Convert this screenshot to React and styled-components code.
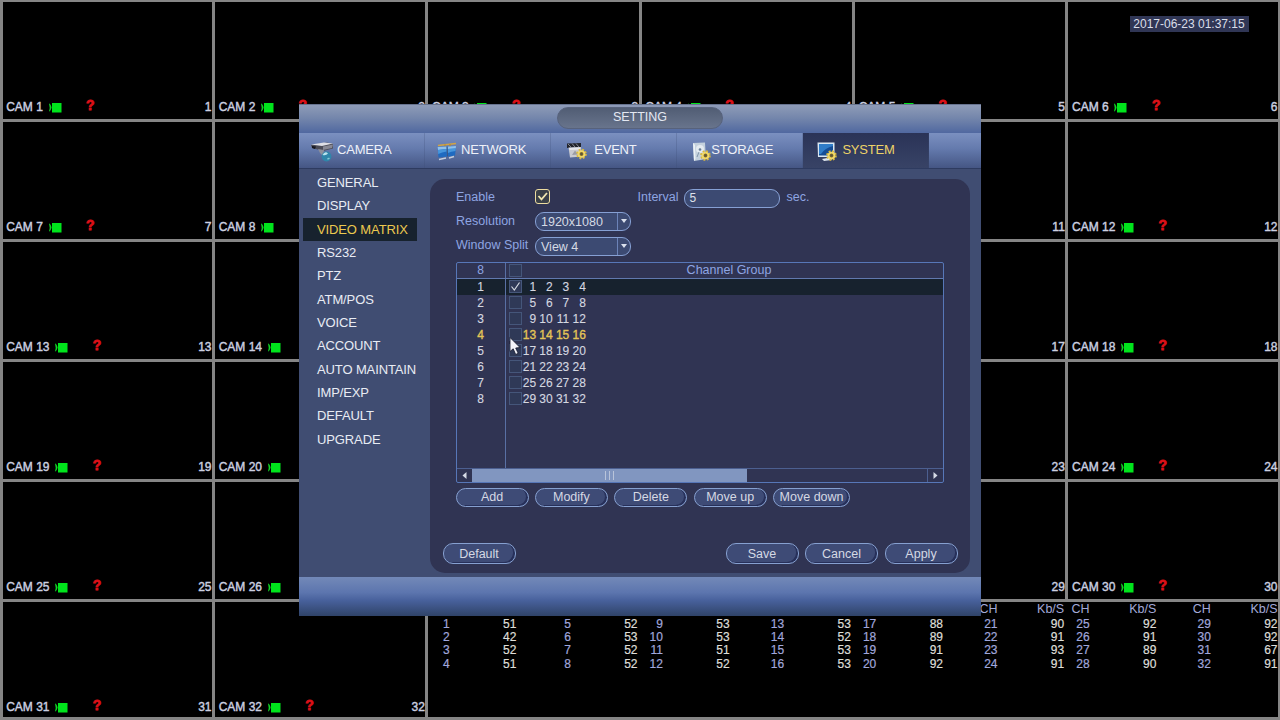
import React from "react";
import styled, { createGlobalStyle } from "styled-components";

const tabs = [
    { name: "CAMERA", icon: "camera", left: 11, gap: 3 },
    { name: "NETWORK", icon: "network", left: 12, gap: 0 },
    { name: "EVENT", icon: "event", left: 16, gap: 3 },
    { name: "STORAGE", icon: "storage", left: 15, gap: -5 },
    { name: "SYSTEM", icon: "system", left: 14, gap: 1 },
];

const menu = [
    "GENERAL", "DISPLAY", "VIDEO MATRIX", "RS232", "PTZ", "ATM/POS",
    "VOICE", "ACCOUNT", "AUTO MAINTAIN", "IMP/EXP", "DEFAULT", "UPGRADE",
];

const cameras = Array.from({ length: 32 }, (_, i) => i + 1);

const rates = [
    [[51, 42, 52, 51], [52, 53, 52, 52]],
    [[53, 53, 51, 52], [53, 52, 53, 53]],
    [[88, 89, 91, 92], [90, 91, 93, 91]],
    [[92, 91, 89, 90], [92, 92, 67, 91]],
];

const groups = [1, 2, 3, 4, 5, 6, 7, 8];

const Gear = ({ x, y }) => (
    <g transform={`translate(${x} ${y})`}>
        <circle r="4.300" fill="none" stroke="#d9b83c" strokeWidth="2" strokeDasharray="1.9 1.48" />
        <circle r="2.900" fill="#8d7424" stroke="#f0d868" strokeWidth="1.900" />
        <circle r="1.200" fill="#5b5540" />
    </g>
);

const icons = {
    camera: (
        <>
            <path d="M1 3 L17 .5 L23 2 L23 6.500 L13 9 L2 6z" fill="#4b4c58" />
            <path d="M1 2.500 L14 .5 L23 1.500 L12 4z" fill="#dedfe6" />
            <path d="M13 4.500 L23 2.500 L22 6 L13 8z" fill="#878894" />
            <path d="M2 4 L6 4.500 L5 7 L2 6z" fill="#15161d" />
            <path d="M8 7 L14 8 L13 14 L10 11z" fill="#8d8f9b" />
            <circle cx="16.500" cy="14.500" r="4.900" fill="#2f86aa" />
            <path d="M12.500 13 Q15 8.500 18 11.500 Q16 14 12.500 13z" fill="#b9e3ec" />
            <path d="M17 17 Q18 15 20 16 Q18.500 18.500 17 17z" fill="#86c8d5" />
        </>
    ),
    network: (
        <>
            <path d="M1 3.500 L19 1.500" stroke="#d3a441" strokeWidth="1.600" />
            <path d="M8 2.500 L8 6 M13 2 L13 5" stroke="#b48a3a" strokeWidth="1.500" />
            <path d="M.5 5 L9.500 4.500 L10 14.500 L1.500 15.500z" fill="#1f6ac0" />
            <path d="M.5 5 L9.500 4.500 L9.500 7 L1 8z" fill="#8fc0ec" />
            <path d="M1 8 L9.500 7 L9.500 9.500 Q5 10 1.200 12z" fill="#4796dc" />
            <path d="M10.500 4.500 L19 4 L18 13.500 L11 14.500z" fill="#1f6ac0" />
            <path d="M10.500 4.500 L19 4 L18.800 6.500 L10.700 7z" fill="#8fc0ec" />
            <path d="M10.700 7 L18.800 6.500 L18.500 9 Q14 9.500 11 11z" fill="#4796dc" />
            <path d="M10.200 4.500 L10.500 14.500" stroke="#34507e" strokeWidth=".8" />
            <path d="M2 17.500 L9 16 M12 16 L17 14.500" stroke="#c4cedd" strokeWidth="1.400" />
        </>
    ),
    event: (
        <>
            <path d="M0 1.500 L14 1 L14 5 L0 6z" fill="#22242c" />
            <path d="M1 2 L4 5 M5 1.500 L8 5 M9 1.500 L12 5" stroke="#8f929c" strokeWidth=".9" />
            <path d="M1.500 5.500 L14 5 L15 14.500 L3 15.500z" fill="#c9cad0" />
            <path d="M2 6 L13 5.500 L13.500 7.500 L2.500 8z" fill="#e6e7eb" />
            <path d="M5 13 L8 8.500 L11 12.500z" fill="#9a9ca5" />
            <Gear x={14.5} y={12} />
        </>
    ),
    storage: (
        <>
            <path d="M1 1 L13 .5 L14 17 L2 19z" fill="#c4d1dd" />
            <path d="M1 1 L3 3 L3.500 17 L2 19z" fill="#ecf2f6" />
            <circle cx="8" cy="7" r="4" fill="#e4ebf1" />
            <circle cx="8" cy="7.500" r="1.300" fill="#667d96" />
            <path d="M7 10 L5 15" stroke="#8297ab" />
            <Gear x={13.5} y={13.5} />
        </>
    ),
    system: (
        <>
            <path d="M.5 .5 H17.500 V15 H1z" fill="#dae7f2" />
            <path d="M2 2 H16 V13.500 H2z" fill="#154d96" />
            <path d="M2 2 H16 V4 Q8 6 4 12 H2z" fill="#2f7cc8" />
            <path d="M5 17 L13 15.500 L15 18 L7 19z" fill="#dee6ee" />
            <Gear x={14.5} y={13.5} />
        </>
    ),
};

// the dialog covers the middle of the wall, so those cells stay partly blank
const isCovered = (n, part) => {
    const column = (n - 1) % 6;
    const row = Math.floor((n - 1) / 6);
    if (row === 0 || row === 5) return false;
    if (part === "number") return column >= 1 && column <= 3;
    if (part === "lost") return column >= 1 && column <= 4;
    return column >= 2 && column <= 4;
};

const App = () => {
    return (
        <Screen>
            <GlobalStyle />
            <Wall>
                {cameras.map((n) => (
                    <Cell key={n}>
                        {!isCovered(n, "name") && (
                            <>
                                <CamName>CAM {n}</CamName>
                                <RecIcon width="14" height="11" viewBox="0 0 14 11">
                                    <path d="M1 1.500 Q2.500 1.500 3.600 5.500 Q2.500 9.500 1 9.500 Q2.300 5.500 1 1.500z" fill="#10d424" />
                                    <rect x="4" y="1" width="9.500" height="9.500" fill="#00e51c" />
                                </RecIcon>
                            </>
                        )}
                        {!isCovered(n, "lost") && <Lost>?</Lost>}
                        {!isCovered(n, "number") && <CamNumber>{n}</CamNumber>}
                    </Cell>
                ))}
                <RateBoard>
                    {rates.map((pair, g) => (
                        <RateGroup key={g}>
                            {pair.map((list, c) => (
                                <React.Fragment key={c}>
                                    <RateColumn $width={c === 0 ? 22 : 54.5}>
                                        <RateHead>{(g === 3 || (g === 2 && c === 1)) && "CH"}</RateHead>
                                        {list.map((_, i) => (
                                            <Channel key={i}>{g * 8 + c * 4 + i + 1}</Channel>
                                        ))}
                                    </RateColumn>
                                    <RateColumn $width={66.7}>
                                        <RateHead>{(g === 3 || (g === 2 && c === 1)) && "Kb/S"}</RateHead>
                                        {list.map((rate, i) => (
                                            <Rate key={i}>{rate}</Rate>
                                        ))}
                                    </RateColumn>
                                </React.Fragment>
                            ))}
                        </RateGroup>
                    ))}
                </RateBoard>
            </Wall>

            <Clock>2017-06-23 01:37:15</Clock>

            <Dialog>
                <TitleBar>
                    <Title>SETTING</Title>
                </TitleBar>
                <TabBar>
                    {tabs.map((tab) => (
                        <Tab key={tab.name} $active={tab.name === "SYSTEM"} $left={tab.left} $gap={tab.gap}>
                            <svg width="24" height="20" viewBox="0 0 24 20" fill="none">{icons[tab.icon]}</svg>
                            <span>{tab.name}</span>
                        </Tab>
                    ))}
                </TabBar>
                <Body>
                    <Menu>
                        {menu.map((item) => (
                            <MenuItem key={item} $active={item === "VIDEO MATRIX"}>{item}</MenuItem>
                        ))}
                    </Menu>
                    <Panel>
                        <Form>
                            <FormRow>
                                <Label>Enable</Label>
                                <Enable>
                                    <svg width="11" height="11" viewBox="0 0 11 11" fill="none">
                                        <path d="M1.500 5 L4.500 8.300 L10 2" stroke="#f0e6b0" strokeWidth="1.800" />
                                    </svg>
                                </Enable>
                                <IntervalLabel>Interval</IntervalLabel>
                                <Input>5</Input>
                                <Unit>sec.</Unit>
                            </FormRow>
                            <FormRow>
                                <Label>Resolution</Label>
                                <Select>
                                    <span>1920x1080</span>
                                    <Arrow />
                                </Select>
                            </FormRow>
                            <FormRow>
                                <Label>Window Split</Label>
                                <Select>
                                    <span>View 4</span>
                                    <Arrow />
                                </Select>
                            </FormRow>
                        </Form>
                        <Table>
                            <HeadRow>
                                <Index>8</Index>
                                <Check />
                                <HeadTitle>Channel Group</HeadTitle>
                            </HeadRow>
                            <Rows>
                                {groups.map((n) => (
                                    <Row key={n} $selected={n === 1} $hover={n === 4}>
                                        <Index>{n}</Index>
                                        <Check>
                                            {n === 1 && (
                                                <svg width="11" height="11" viewBox="0 0 11 11" fill="none">
                                                    <path d="M1.500 5.500 L4.300 9 L9.500 1.500" stroke="#d5d9e2" strokeWidth="1.200" />
                                                </svg>
                                            )}
                                        </Check>
                                        <Numbers>
                                            {[3, 2, 1, 0].map((k) => (
                                                <span key={k}>{n * 4 - k}</span>
                                            ))}
                                        </Numbers>
                                    </Row>
                                ))}
                                <Filler />
                            </Rows>
                            <ScrollBar>
                                <ScrollEnd>
                                    <svg width="5" height="7"><path d="M4.500 0 V7 L.5 3.500z" fill="#d6dbe6" /></svg>
                                </ScrollEnd>
                                <Thumb><i /><i /><i /></Thumb>
                                <Track />
                                <ScrollEnd $right>
                                    <svg width="5" height="7"><path d="M.5 0 V7 L4.500 3.500z" fill="#d6dbe6" /></svg>
                                </ScrollEnd>
                            </ScrollBar>
                        </Table>
                        <Actions>
                            <Button>Add</Button>
                            <Button>Modify</Button>
                            <Button>Delete</Button>
                            <Button>Move up</Button>
                            <Button $width={77}>Move down</Button>
                        </Actions>
                        <BottomActions>
                            <Button $height={21}>Default</Button>
                            <Spacer />
                            <Button $height={21}>Save</Button>
                            <Button $height={21}>Cancel</Button>
                            <Button $height={21}>Apply</Button>
                        </BottomActions>
                    </Panel>
                </Body>
                <Footer />
            </Dialog>

            <Cursor width="13" height="19" viewBox="0 0 13 19">
                <path d="M1 .5 V14.500 L4.200 11.800 L6.700 17.500 L9.200 16.300 L6.700 11 L11 10.500z" fill="#f4f4fa" stroke="#14162c" strokeWidth=".8" />
            </Cursor>
        </Screen>
    );
}

export default App;

const GlobalStyle = createGlobalStyle`
    body {
        margin: 0;
        background: #000;
        font-family: "Liberation Sans", Arial, sans-serif;
    }

    * {
        box-sizing: border-box;
    }
`;

const Screen = styled.div`
    position: relative;
    width: 1280px;
    height: 720px;
    overflow: hidden;
`;

const Wall = styled.div`
    display: grid;
    height: 720px;
    padding: 2px 2px 3px 2.5px;
    gap: 3px;
    grid-template-columns: 209.5px repeat(4, 210.33px) 1fr;
    grid-template-rows: repeat(5, 117px) 1fr;
    background: #858585;
`;

const Cell = styled.div`
    display: flex;
    align-items: flex-start;
    height: 100%;
    padding: 97px 0.5px 0 3.7px;
    background: #000;
    color: #ccd0e0;
    font-size: 12px;
    line-height: 16px;
    white-space: nowrap;
    overflow: hidden;
`;

const CamName = styled.span`
    -webkit-text-stroke: 0.4px #ccd0e0;
`;

const RecIcon = styled.svg`
    margin: 2.5px 0 0 4.7px;
    flex: none;
`;

const Lost = styled.span`
    margin: -2px 0 0 24.5px;
    color: #dc1018;
    font-size: 14px;
    font-weight: bold;
    -webkit-text-stroke: 0.8px #dc1018;
`;

const CamNumber = styled.span`
    margin-left: auto;
    -webkit-text-stroke: 0.4px #ccd0e0;
`;

const RateBoard = styled.div`
    grid-column: 3 / 7;
    display: flex;
    padding-top: 1px;
    background: #000;
    overflow: hidden;
`;

const RateGroup = styled.div`
    display: flex;
    flex: none;
    width: 213.33px;
    margin-left: -0.7px;
    margin-right: 0.7px;
`;

const RateColumn = styled.div`
    display: flex;
    flex-direction: column;
    align-items: flex-end;
    flex: none;
    width: ${(p) => p.$width}px;
    font-size: 12px;
    line-height: 13.4px;
    white-space: nowrap;
`;

const RateHead = styled.div`
    height: 14.6px;
    color: #a3a9d8;
    font-size: 12.5px;
`;

const Channel = styled.div`
    color: #a0a7dc;
    -webkit-text-stroke: 0.2px #a0a7dc;
`;

const Rate = styled.div`
    color: #deded8;
    -webkit-text-stroke: 0.2px #deded8;
`;

const Clock = styled.div`
    position: absolute;
    top: 16px;
    left: 1130px;
    width: 119px;
    height: 16px;
    padding-right: 1px;
    background: #303655;
    color: #dadeea;
    font-size: 12px;
    line-height: 16px;
    text-align: center;
`;

const Dialog = styled.div`
    position: absolute;
    top: 104px;
    left: 299px;
    display: flex;
    flex-direction: column;
    width: 682px;
    height: 512px;
    background: #404d72;
    color: #e4e8f2;
    font-size: 13px;
    white-space: nowrap;
`;

const TitleBar = styled.div`
    display: flex;
    justify-content: center;
    height: 29px;
    padding-top: 2px;
    border-top: 1px solid #66728e;
    background: linear-gradient(#8e9bb7, #7587ac 45%, #5068a0);
`;

const Title = styled.div`
    width: 166px;
    height: 22px;
    border: 1px solid #57627c;
    border-radius: 11px;
    background: linear-gradient(#515d74, #68748c);
    font-size: 12.5px;
    line-height: 19px;
    text-align: center;
`;

const TabBar = styled.div`
    display: flex;
    height: 36px;
    border-bottom: 1px solid #2e3b60;
    background: linear-gradient(#7b90c0, #647aad 45%, #455684);
`;

const Tab = styled.div`
    display: flex;
    align-items: center;
    width: 126.1px;
    height: 35px;
    padding-left: ${(p) => p.$left}px;
    border-right: 1px solid rgba(60, 75, 115, 0.25);
    background: ${(p) => (p.$active ? "linear-gradient(#2a3357, #384366)" : "none")};
    color: ${(p) => (p.$active ? "#ecd268" : "#eef1f8")};

    span {
        margin: -2px 0 0 ${(p) => p.$gap}px;
        letter-spacing: -0.2px;
    }

    svg {
        flex: none;
        margin-top: 2px;
    }
`;

const Body = styled.div`
    display: flex;
    height: 408px;
    padding: 10px 11px 0 4px;
`;

const Menu = styled.div`
    width: 126.5px;
    margin-top: -8px;
`;

const MenuItem = styled.div`
    width: 113.5px;
    height: 23.35px;
    padding-left: 14px;
    background: ${(p) => (p.$active ? "#17222e" : "none")};
    color: ${(p) => (p.$active ? "#ecc94f" : "#e8ecf4")};
    line-height: 23px;
    letter-spacing: -0.12px;
`;

const Panel = styled.div`
    display: flex;
    flex-direction: column;
    width: 540px;
    height: 394px;
    padding: 6px 12px 9px 13px;
    border-radius: 15px;
    background: #303453;
`;

const Form = styled.div`
    padding: 0 0 0 13.5px;
`;

const FormRow = styled.div`
    display: flex;
    align-items: center;
    height: 24.3px;
    color: #8ea5e2;
`;

const Label = styled.div`
    width: 79px;
    margin-top: -0.5px;
    font-size: 12.5px;
`;

const Enable = styled.div`
    display: flex;
    align-items: center;
    justify-content: center;
    width: 15px;
    height: 15px;
    margin-top: -1px;
    border: 1.5px solid #ecdca0;
    border-radius: 3px;
    background: #3a4048;
`;

const IntervalLabel = styled.div`
    width: 46px;
    margin: -0.5px 0 0 87.5px;
    font-size: 12.5px;
`;

const Input = styled.div`
    width: 96px;
    height: 19px;
    padding-left: 5px;
    margin-top: 2px;
    border: 1px solid #86a0d4;
    border-radius: 9px;
    background: #3c4a72;
    color: #dde1ea;
    font-size: 12px;
    line-height: 17px;
`;

const Unit = styled.div`
    margin: -1px 0 0 7px;
    font-size: 12.5px;
`;

const Select = styled.div`
    display: flex;
    align-items: stretch;
    justify-content: space-between;
    width: 96px;
    height: 19px;
    padding-left: 5px;
    margin-top: 1px;
    border: 1px solid #86a0d4;
    border-radius: 9px;
    background: #3c4a72;
    color: #d5dae4;
    font-size: 12.5px;
    line-height: 18px;
`;

const Arrow = styled.i`
    display: flex;
    align-items: center;
    width: 13px;
    border-left: 1px solid #6c83b8;

    &::after {
        content: "";
        margin: -1px 0 0 3px;
        border: 3px solid transparent;
        border-top: 4px solid #dbe1ee;
        border-bottom: 0;
    }
`;

const Table = styled.div`
    display: flex;
    flex-direction: column;
    width: 488px;
    height: 221px;
    margin: 4px 0 0 13px;
    border: 1.5px solid #5777b8;
    border-radius: 2px;
    color: #d5d8e0;
    font-size: 12px;
`;

const HeadRow = styled.div`
    display: flex;
    align-items: center;
    height: 16px;
    border-bottom: 1px solid #6179ae;
    color: #8ea5e2;
`;

const Index = styled.div`
    align-self: stretch;
    display: flex;
    align-items: center;
    justify-content: center;
    width: 49px;
    border-right: 1.5px solid #5970a4;
`;

const Check = styled.div`
    display: flex;
    align-items: center;
    justify-content: center;
    width: 13px;
    height: 13px;
    margin-left: 3px;
    border: 1px solid #45567a;
    background: #2f3957;
`;

const HeadTitle = styled.div`
    flex: 1;
    padding-right: 6px;
    font-size: 12.5px;
    text-align: center;
`;

const Rows = styled.div`
    flex: 1;
    display: flex;
    flex-direction: column;
`;

const Row = styled.div`
    display: flex;
    align-items: center;
    height: 16px;
    background: ${(p) => (p.$selected ? "#17222e" : "none")};
    color: ${(p) => (p.$hover ? "#e3c456" : "inherit")};
    -webkit-text-stroke: ${(p) => (p.$hover ? "0.35px #e3c456" : "0.1px #d5d8e0")};
`;

const Numbers = styled.div`
    display: grid;
    grid-template-columns: repeat(4, 16.6px);
    margin-left: -2px;
    text-align: right;
`;

const Filler = styled.div`
    flex: 1;
    width: 49px;
    border-right: 1.5px solid #5970a4;
`;

const ScrollBar = styled.div`
    display: flex;
    height: 14px;
    border-top: 1px solid #4c5f90;
`;

const ScrollEnd = styled.div`
    display: flex;
    align-items: center;
    justify-content: center;
    width: 15.5px;
    border-left: ${(p) => (p.$right ? "1px solid #4c5f90" : "none")};
`;

const Thumb = styled.div`
    display: flex;
    align-items: center;
    justify-content: center;
    gap: 3px;
    width: 275px;
    background: #8196c0;

    i {
        width: 1px;
        height: 9px;
        background: #b9c4da;
    }
`;

const Track = styled.div`
    flex: 1;
`;

const Actions = styled.div`
    display: flex;
    gap: 6.4px;
    margin: 5px 0 0 13px;
`;

const Button = styled.div`
    width: ${(p) => p.$width || 73}px;
    height: ${(p) => p.$height || 19.5}px;
    border: 1.5px solid #86a0d0;
    border-radius: 10px;
    background: #3e4b76;
    box-shadow: inset -2px -1px 0 #27305a;
    color: #d5d9e4;
    font-size: 12.5px;
    line-height: ${(p) => (p.$height ? 20 : 16.5)}px;
    text-align: center;
`;

const BottomActions = styled.div`
    display: flex;
    gap: 6.5px;
    margin-top: auto;
`;

const Spacer = styled.div`
    flex: 1;
`;

const Footer = styled.div`
    height: 39px;
    background: linear-gradient(#7389b8, #5c75ae 40%, #48619c 60%, #2f4368);
`;

const Cursor = styled.svg`
    position: absolute;
    top: 337px;
    left: 509px;
`;
